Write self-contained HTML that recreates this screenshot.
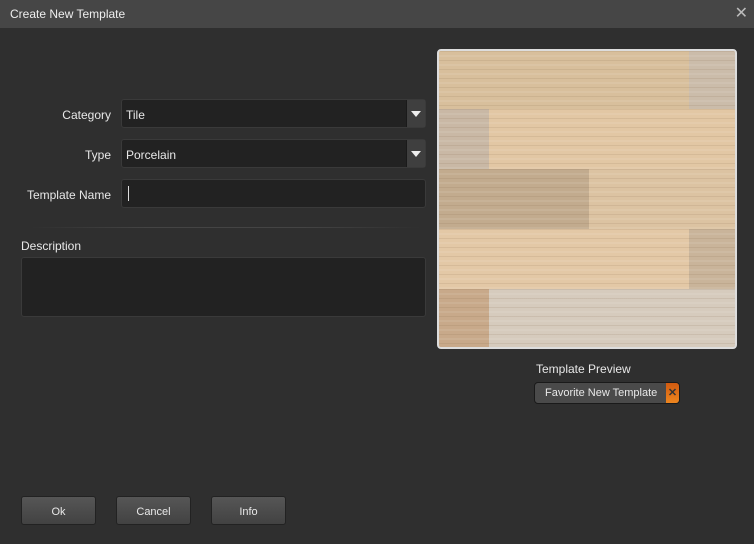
<!DOCTYPE html><html><head><style>
body{margin:0;width:754px;height:544px;background:#2f2f2f;font-family:"Liberation Sans",sans-serif;font-size:12px;color:#e8e8e8;position:relative;overflow:hidden}
.t{position:absolute;left:0;top:0;width:754px;height:28px;background:#464646}
.t span{position:absolute;left:10px;top:7px;font-size:12px;color:#eee}
.x{position:absolute;right:6px;top:3px;font-size:16px;color:#bbb}
.lbl{position:absolute;text-align:right;width:111px;left:0}
.f{position:absolute;left:121px;width:305px;height:29px;background:#222;border:1px solid #3a3a3a;border-radius:3px;box-sizing:border-box}
.f span{position:absolute;left:4px;top:8px}
.dd{position:absolute;right:0;top:0;width:18px;height:100%;background:#3f3f3f;border-left:1px solid #1a1a1a}
.dd:after{content:"";position:absolute;left:4px;top:11px;border:5px solid transparent;border-top:6px solid #eee;border-bottom:0}
.b{position:absolute;top:496px;width:75px;height:29px;border-radius:3px;background:linear-gradient(#565656,#424242);border:1px solid #222;box-sizing:border-box;text-align:center;line-height:30px;font-size:11px}
.img{position:absolute;left:437px;top:49px;width:300px;height:300px;border:2px solid #ddd;border-radius:4px;box-sizing:border-box;overflow:hidden;background:#d9c3a3}
.img div{position:absolute;background-image:repeating-linear-gradient(180deg,rgba(120,90,60,.12) 0 1px,transparent 1px 4px,rgba(255,255,255,.08) 4px 6px,transparent 6px 9px)}
</style></head><body>
<div class="t"><span>Create New Template</span><div class="x">✕</div></div>
<div class="lbl" style="top:108px">Category</div>
<div class="f" style="top:99px"><span>Tile</span><div class="dd"></div></div>
<div class="lbl" style="top:148px">Type</div>
<div class="f" style="top:139px"><span>Porcelain</span><div class="dd"></div></div>
<div class="lbl" style="top:188px">Template Name</div>
<div class="f" style="top:179px"><span style="top:6px;width:1px;height:15px;background:#ddd;left:6px"></span></div>
<div style="position:absolute;left:30px;top:227px;width:390px;height:1px;background:linear-gradient(90deg,transparent,#444 30%,#444 70%,transparent)"></div>
<div style="position:absolute;left:21px;top:239px">Description</div>
<div class="f" style="left:21px;width:405px;height:60px;top:257px"></div>
<div class="img">
<div style="left:0;top:0;width:250px;height:58px;background-color:#d8bf9c"></div>
<div style="left:250px;top:0;width:50px;height:58px;background-color:#cbbcaa"></div>
<div style="left:0;top:58px;width:50px;height:60px;background-color:#c9b8a5"></div>
<div style="left:50px;top:58px;width:250px;height:60px;background-color:#e2c7a4"></div>
<div style="left:0;top:118px;width:150px;height:60px;background-color:#c2ab8e"></div>
<div style="left:150px;top:118px;width:150px;height:60px;background-color:#dcc3a2"></div>
<div style="left:0;top:178px;width:250px;height:60px;background-color:#e3c8a6"></div>
<div style="left:250px;top:178px;width:50px;height:60px;background-color:#c9b49a"></div>
<div style="left:0;top:238px;width:50px;height:60px;background-color:#c8a98a"></div>
<div style="left:50px;top:238px;width:250px;height:60px;background-color:#d6cbbd"></div>
</div>
<div style="position:absolute;left:536px;top:362px;font-size:12px">Template Preview</div>
<div style="position:absolute;left:534px;top:382px;width:146px;height:22px;border:1px solid #1a1a1a;border-radius:4px;background:#4a4a4a;box-sizing:border-box;overflow:hidden">
<span style="position:absolute;left:10px;top:4px;font-size:11px">Favorite New Template</span>
<div style="position:absolute;right:0;top:0;width:13px;height:22px;background:linear-gradient(#d05a10,#f08a20);color:#333;font-size:11px;text-align:center;line-height:20px;font-weight:bold">✕</div></div>
<div class="b" style="left:21px">Ok</div>
<div class="b" style="left:116px">Cancel</div>
<div class="b" style="left:211px">Info</div>
</body></html>
